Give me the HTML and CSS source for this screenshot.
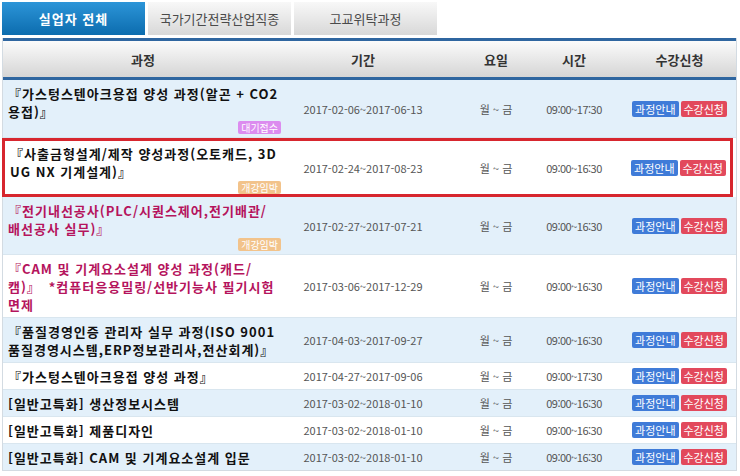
FILE: index.html
```html
<!DOCTYPE html>
<html lang="ko">
<head>
  <meta charset="UTF-8" />
  <title>과정 목록</title>
  <link rel="stylesheet" href="styles.css">
</head>
<body>
  <div class="page">
    <div class="tabs">
      <div class="tab active">실업자 전체</div>
      <div class="tab">국가기간전략산업직종</div>
      <div class="tab">고교위탁과정</div>
    </div>

    <div class="course-table">
      <div class="row head">
        <div class="cell">과정</div>
        <div class="cell">기간</div>
        <div class="cell day">요일</div>
        <div class="cell">시간</div>
        <div class="cell apply">수강신청</div>
      </div>

      <div class="row">
        <div class="cell course">
          <div class="title">『가스텅스텐아크용접 양성 과정(알곤 + CO2 용접)』</div>
          <div class="badge-line"><span class="badge wait">대기접수</span></div>
        </div>
        <div class="cell info">2017-02-06~2017-06-13</div>
        <div class="cell info day">월 ~ 금</div>
        <div class="cell info time">09:00~17:30</div>
        <div class="cell apply"><span class="btn guide">과정안내</span><span class="btn join">수강신청</span></div>
      </div>

      <div class="row current">
        <div class="cell course">
          <div class="title">『사출금형설계/제작 양성과정(오토캐드, 3D UG NX 기계설계)』</div>
          <div class="badge-line"><span class="badge soon">개강임박</span></div>
        </div>
        <div class="cell info">2017-02-24~2017-08-23</div>
        <div class="cell info day">월 ~ 금</div>
        <div class="cell info time">09:00~16:30</div>
        <div class="cell apply"><span class="btn guide">과정안내</span><span class="btn join">수강신청</span></div>
      </div>

      <div class="row">
        <div class="cell course">
          <div class="title hot">『전기내선공사(PLC/시퀀스제어,전기배관/배선공사 실무)』</div>
          <div class="badge-line"><span class="badge soon">개강임박</span></div>
        </div>
        <div class="cell info">2017-02-27~2017-07-21</div>
        <div class="cell info day">월 ~ 금</div>
        <div class="cell info time">09:00~16:30</div>
        <div class="cell apply"><span class="btn guide">과정안내</span><span class="btn join">수강신청</span></div>
      </div>

      <div class="row">
        <div class="cell course">
          <div class="title hot">『CAM 및 기계요소설계 양성 과정(캐드/캠)』&nbsp; *컴퓨터응용밀링/선반기능사 필기시험 면제</div>
        </div>
        <div class="cell info">2017-03-06~2017-12-29</div>
        <div class="cell info day">월 ~ 금</div>
        <div class="cell info time">09:00~16:30</div>
        <div class="cell apply"><span class="btn guide">과정안내</span><span class="btn join">수강신청</span></div>
      </div>

      <div class="row">
        <div class="cell course">
          <div class="title">『품질경영인증 관리자 실무 과정(ISO 9001 품질경영시스템,ERP정보관리사,전산회계)』</div>
        </div>
        <div class="cell info">2017-04-03~2017-09-27</div>
        <div class="cell info day">월 ~ 금</div>
        <div class="cell info time">09:00~16:30</div>
        <div class="cell apply"><span class="btn guide">과정안내</span><span class="btn join">수강신청</span></div>
      </div>

      <div class="row">
        <div class="cell course">
          <div class="title">『가스텅스텐아크용접 양성 과정』</div>
        </div>
        <div class="cell info">2017-04-27~2017-09-06</div>
        <div class="cell info day">월 ~ 금</div>
        <div class="cell info time">09:00~17:30</div>
        <div class="cell apply"><span class="btn guide">과정안내</span><span class="btn join">수강신청</span></div>
      </div>

      <div class="row">
        <div class="cell course">
          <div class="title">[일반고특화] 생산정보시스템</div>
        </div>
        <div class="cell info">2017-03-02~2018-01-10</div>
        <div class="cell info day">월 ~ 금</div>
        <div class="cell info time">09:00~16:30</div>
        <div class="cell apply"><span class="btn guide">과정안내</span><span class="btn join">수강신청</span></div>
      </div>

      <div class="row">
        <div class="cell course">
          <div class="title">[일반고특화] 제품디자인</div>
        </div>
        <div class="cell info">2017-03-02~2018-01-10</div>
        <div class="cell info day">월 ~ 금</div>
        <div class="cell info time">09:00~16:30</div>
        <div class="cell apply"><span class="btn guide">과정안내</span><span class="btn join">수강신청</span></div>
      </div>

      <div class="row">
        <div class="cell course">
          <div class="title">[일반고특화] CAM 및 기계요소설계 입문</div>
        </div>
        <div class="cell info">2017-03-02~2018-01-10</div>
        <div class="cell info day">월 ~ 금</div>
        <div class="cell info time">09:00~16:30</div>
        <div class="cell apply"><span class="btn guide">과정안내</span><span class="btn join">수강신청</span></div>
      </div>
    </div>
  </div>
</body>
</html>
```

FILE: styles.css
```css
* {
  margin: 0;
  padding: 0;
  box-sizing: border-box;
}

body {
  font-family: "Noto Sans CJK KR", "Noto Sans", sans-serif;
  background: #fff;
  color: #222;
}

.page {
  padding: 2px 0 0 2px;
  width: 740px;
}

/* tabs */
.tabs {
  display: flex;
  gap: 3px;
  margin-bottom: 3px;
}

.tab {
  width: 143px;
  height: 33px;
  display: flex;
  align-items: center;
  justify-content: center;
  font-size: 13px;
  color: #4a4a4a;
  background: linear-gradient(#f8f8f8, #d8d8d8);
}

.tab.active {
  background: linear-gradient(#2c95d8, #0c6cae);
  color: #fff;
  font-weight: bold;
  letter-spacing: 1px;
}

/* table */
.course-table {
  width: 735px;
  border-left: 1px solid #d3dbe2;
  border-right: 1px solid #d3dbe2;
  border-bottom: 1px solid #d3dbe2;
}

.row {
  display: grid;
  grid-template-columns: 280px 160px 96px 70px 1fr;
  align-items: center;
  border-bottom: 1px solid #d9e6ef;
}

.row:nth-child(even) {
  background: #e3f0fa;
}

.row:last-child {
  border-bottom: none;
}

.row.head {
  height: 42px;
  border-top: 3px solid #2f66a0;
  border-bottom: 3px solid #2f66a0;
  background: linear-gradient(#fbfbfb, #d5d5d5);
  font-size: 13px;
  font-weight: bold;
  color: #333;
}

.row.current {
  margin: 0 3px 0 -1px;
  border: 3px solid #d7262e;
  grid-template-columns: 278px 160px 96px 70px 1fr;
}

.cell {
  text-align: center;
}

.cell.day {
  padding-left: 10px;
}

.cell.apply {
  padding-left: 14px;
  display: flex;
  justify-content: center;
  gap: 2px;
}

.row.current .cell.apply {
  padding-left: 18px;
}

.cell.course {
  text-align: left;
  padding: 5px 2px 3px 5px;
}

.row.current .cell.course {
  padding: 4px 2px 1px 5px;
}

.title {
  font-size: 13px;
  line-height: 18px;
  font-weight: bold;
  letter-spacing: 1px;
  color: #111;
  word-break: keep-all;
}

.title.hot {
  color: #b5145d;
}

.badge-line {
  text-align: right;
  height: 13px;
}

.row.current .badge-line {
  height: 12px;
}

.badge {
  display: inline-block;
  font-size: 10px;
  line-height: 13px;
  padding: 0 3px;
  color: #fff;
  border-radius: 2px;
  vertical-align: top;
}

.badge.wait {
  background: #dc8cef;
}

.badge.soon {
  background: #f2c38b;
}

.info {
  font-size: 11px;
  color: #555;
}

.info.time {
  letter-spacing: -0.5px;
}

.btn {
  font-size: 11px;
  line-height: 16px;
  padding: 0 3px;
  color: #fff;
  border-radius: 2px;
}

.btn.guide {
  background: #3f7bd8;
}

.btn.join {
  background: #e2495c;
}
```
